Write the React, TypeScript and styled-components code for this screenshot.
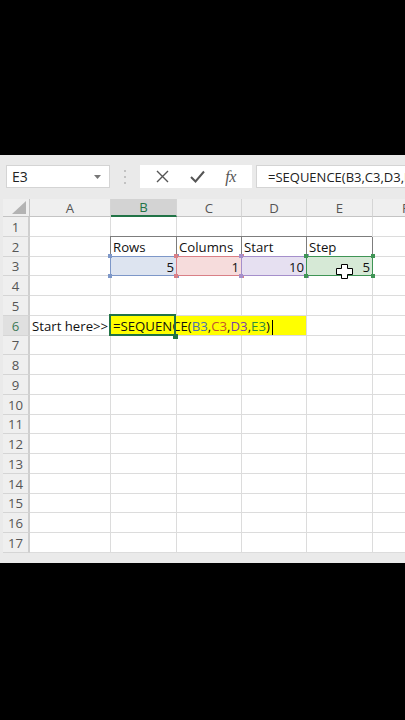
import React from "react";
import styled, { createGlobalStyle, css } from "styled-components";

const Global = createGlobalStyle`
  html, body { margin: 0; padding: 0; background: #000; }
  #root { width: 405px; height: 720px; }
`;

const Screen = styled.div`
  width: 405px;
  height: 720px;
  background: #000;
  display: flex;
  flex-direction: column;
  overflow: hidden;
`;

const BlackBand = styled.div<{ $h?: number }>`
  flex: ${(p) => (p.$h ? `0 0 ${p.$h}px` : "1")};
  background: #000;
`;

const Window = styled.div`
  background: #eaeaea;
  padding-left: 3px;
  padding-bottom: 10px;
  font-family: "Open Sans", "Liberation Sans", sans-serif;
`;

const Toolbar = styled.div`
  height: 44px;
  display: flex;
  align-items: flex-start;
  padding-top: 10px;
  box-sizing: border-box;
`;

const NameBox = styled.div`
  width: 104px;
  height: 23px;
  margin-left: 3px;
  box-sizing: border-box;
  background: #fff;
  border: 1px solid #d4d4d4;
  display: flex;
  align-items: center;
  justify-content: space-between;
  padding: 0 8px 0 5px;
  font-size: 14px;
  color: #222;
`;

const Grip = styled.div`
  width: 30px;
  height: 23px;
  display: flex;
  flex-direction: column;
  align-items: center;
  justify-content: center;
  gap: 4px;
  span {
    width: 2px;
    height: 2px;
    background: #c2c2c2;
  }
`;

const FuncBox = styled.div`
  width: 112px;
  height: 23px;
  background: #fff;
  display: flex;
  align-items: center;
  justify-content: space-around;
  padding: 0 6px;
  box-sizing: border-box;
`;

const Fx = styled.span`
  font-family: "Liberation Serif", serif;
  font-style: italic;
  font-size: 16px;
  color: #555;
  letter-spacing: -0.5px;
`;

const FormulaBar = styled.div`
  flex: 1;
  height: 23px;
  margin-left: 4px;
  background: #fff;
  border: 1px solid #d4d4d4;
  border-right: none;
  box-sizing: border-box;
  display: flex;
  align-items: center;
  padding-left: 11px;
  font-size: 13px;
  color: #222;
  white-space: nowrap;
  overflow: hidden;
`;

const Sheet = styled.div`
  display: grid;
  grid-template-columns: 27px 81px 66px 65px 65px 66px 66px;
  grid-template-rows: 18px repeat(17, 19.75px);
  width: 402px;
  overflow: hidden;
  background: #fff;
  font-size: 13.2px;
`;

const Head = styled.div<{ $active?: boolean }>`
  background: ${(p) => (p.$active ? "#d3d3d3" : "#efefef")};
  color: ${(p) => (p.$active ? "#217346" : "#555")};
  border-right: 1px solid #d5d5d5;
  border-bottom: ${(p) => (p.$active ? "2px solid #217346" : "1px solid #c4c4c4")};
  box-sizing: border-box;
  display: flex;
  align-items: center;
  justify-content: center;
  padding-top: 2px;
  line-height: 1;
`;

const Corner = styled.div`
  background: #efefef;
  border-right: 1px solid #c4c4c4;
  border-bottom: 1px solid #c4c4c4;
  box-sizing: border-box;
  display: flex;
  align-items: flex-end;
  justify-content: flex-end;
  padding: 0 3px 2px 0;
`;

const RowHead = styled.div<{ $active?: boolean }>`
  background: ${(p) => (p.$active ? "#e0e0e0" : "#efefef")};
  color: ${(p) => (p.$active ? "#3d7a58" : "#555")};
  border-right: 2px solid #cfcfcf;
  border-bottom: 1px solid #d5d5d5;
  box-sizing: border-box;
  display: flex;
  align-items: center;
  justify-content: center;
  padding-top: 2px;
  line-height: 1;
`;

type Range = { fill: string; line: string };

const Cell = styled.div<{ $range?: Range; $boxed?: boolean; $yellow?: boolean; $right?: boolean; $over?: boolean }>`
  position: relative;
  box-sizing: border-box;
  border-right: 1px solid #dcdcdc;
  border-bottom: 1px solid #dcdcdc;
  display: flex;
  align-items: center;
  justify-content: ${(p) => (p.$right ? "flex-end" : "flex-start")};
  padding: 2px 2px 0 2px;
  white-space: nowrap;
  color: #111;
  overflow: ${(p) => (p.$over ? "visible" : "hidden")};
  z-index: ${(p) => (p.$over ? 2 : "auto")};
  ${(p) =>
    p.$boxed &&
    css`
      border-right-color: #7d7d7d;
      box-shadow: -1px -1px 0 #7d7d7d;
    `}
  ${(p) =>
    p.$range &&
    css`
      background: ${p.$range.fill};
      border-right-color: ${p.$range.line};
      border-bottom-color: ${p.$range.line};
      box-shadow: -1px -1px 0 ${p.$range.line};
      z-index: 1;
      overflow: visible;
    `}
  ${(p) =>
    p.$yellow &&
    css`
      background: #ffff00;
      border-right-color: #ffff00;
    `}
`;

const Handle = styled.span<{ $c: string; $pos: string }>`
  position: absolute;
  width: 4px;
  height: 4px;
  background: ${(p) => p.$c};
  ${(p) => (p.$pos.includes("t") ? "top: -3px;" : "bottom: -3px;")}
  ${(p) => (p.$pos.includes("l") ? "left: -3px;" : "right: -3px;")}
`;

const ActiveFrame = styled.span`
  position: absolute;
  left: -2px;
  top: -2px;
  width: 67px;
  bottom: -1px;
  border: 2px solid #217346;
  box-sizing: border-box;
  pointer-events: none;
`;

const FillHandle = styled.span`
  position: absolute;
  left: 62px;
  bottom: -4px;
  width: 5px;
  height: 5px;
  background: #217346;
`;

const Ref = styled.span<{ $c: string }>`
  color: ${(p) => p.$c};
`;

const Caret = styled.span`
  display: inline-block;
  width: 1px;
  height: 15px;
  background: #000;
  margin-left: 2px;
  vertical-align: middle;
`;

const PlusCursor = styled.svg`
  position: absolute;
  left: 29px;
  top: 7px;
`;

const ranges: Record<string, Range> = {
  B: { fill: "#dde4f0", line: "#7d97c8" },
  C: { fill: "#f6dcdc", line: "#d97f86" },
  D: { fill: "#e6e0f1", line: "#a58fcb" },
  E: { fill: "#d6e9d6", line: "#3f9455" },
};

const cols = ["A", "B", "C", "D", "E", "F"];

function Handles({ c }: { c: string }) {
  return (
    <>
      {["tl", "tr", "bl", "br"].map((p) => (
        <Handle key={p} $c={c} $pos={p} />
      ))}
    </>
  );
}

function renderCell(row: number, col: string) {
  const key = `${col}${row}`;
  if (row === 2 && ["B", "C", "D", "E"].includes(col)) {
    const label: Record<string, string> = { B: "Rows", C: "Columns", D: "Start", E: "Step" };
    return (
      <Cell key={key} $boxed>
        {label[col]}
      </Cell>
    );
  }
  if (row === 3 && ranges[col]) {
    const vals: Record<string, string> = { B: "5", C: "1", D: "10", E: "5" };
    return (
      <Cell key={key} $range={ranges[col]} $right>
        {vals[col]}
        <Handles c={ranges[col].line} />
        {col === "E" && (
          <PlusCursor width="17" height="15" viewBox="0 0 17 15">
            <path
              d="M5.5 0.5 H11.5 V4.5 H16.5 V10.5 H11.5 V14.5 H5.5 V10.5 H0.5 V4.5 H5.5 Z"
              fill="#fff"
              stroke="#000"
              strokeWidth="1"
            />
          </PlusCursor>
        )}
      </Cell>
    );
  }
  if (row === 6) {
    if (col === "A") return <Cell key={key}>Start here&gt;&gt;</Cell>;
    if (col === "B")
      return (
        <Cell key={key} $yellow $over>
          <span>
            =SEQUENCE(<Ref $c="#4a6fb0">B3</Ref>,<Ref $c="#c0562e">C3</Ref>,
            <Ref $c="#7a3fa6">D3</Ref>,<Ref $c="#2f8a3e">E3</Ref>)
            <Caret />
          </span>
          <ActiveFrame />
          <FillHandle />
        </Cell>
      );
    if (col === "C" || col === "D") {
      return <Cell key={key} $yellow style={col === "D" ? { borderRightColor: "#dcdcdc" } : undefined} />;
    }
  }
  return <Cell key={key} />;
}

export default function App() {
  const rows = Array.from({ length: 17 }, (_, i) => i + 1);
  return (
    <Screen>
      <Global />
      <BlackBand $h={155} />
      <Window>
        <Toolbar>
          <NameBox>
            <span>E3</span>
            <svg width="7" height="4" viewBox="0 0 7 4">
              <path d="M0 0 H7 L3.5 4 Z" fill="#777" />
            </svg>
          </NameBox>
          <Grip>
            <span />
            <span />
            <span />
          </Grip>
          <FuncBox>
            <svg width="13" height="13" viewBox="0 0 13 13">
              <path d="M1 1 L12 12 M12 1 L1 12" stroke="#555" strokeWidth="1.4" />
            </svg>
            <svg width="15" height="13" viewBox="0 0 15 13">
              <path d="M1 7 L5.5 11.5 L14 1.5" stroke="#555" strokeWidth="2" fill="none" />
            </svg>
            <Fx>fx</Fx>
          </FuncBox>
          <FormulaBar>=SEQUENCE(B3,C3,D3,E3)</FormulaBar>
        </Toolbar>
        <Sheet>
          <Corner>
            <svg width="14" height="13" viewBox="0 0 14 13">
              <path d="M14 0 V13 H0 Z" fill="#b3b3b3" />
            </svg>
          </Corner>
          {cols.map((c) => (
            <Head key={c} $active={c === "B"}>
              {c}
            </Head>
          ))}
          {rows.map((r) => (
            <React.Fragment key={r}>
              <RowHead $active={r === 6}>{r}</RowHead>
              {cols.map((c) => renderCell(r, c))}
            </React.Fragment>
          ))}
        </Sheet>
      </Window>
      <BlackBand />
    </Screen>
  );
}
